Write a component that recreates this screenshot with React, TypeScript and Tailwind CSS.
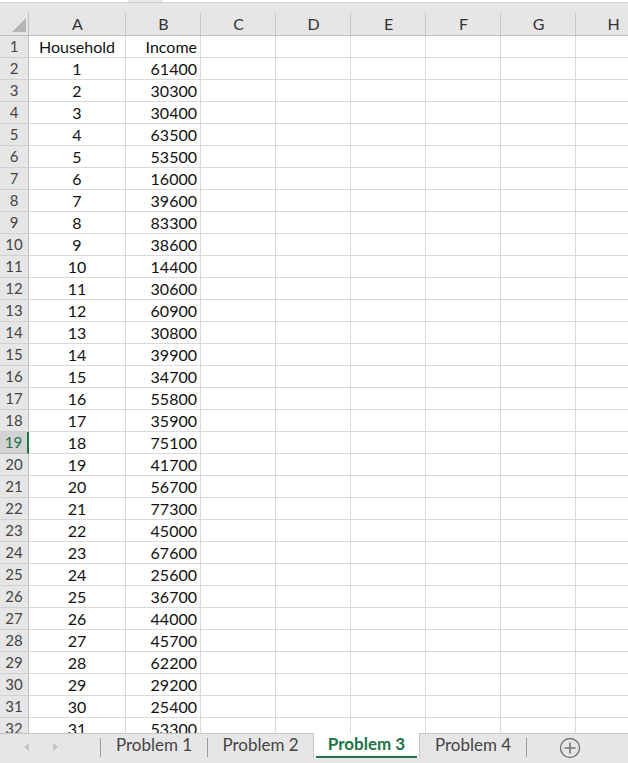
import React from "react";

const incomes = [61400,30300,30400,63500,53500,16000,39600,83300,38600,14400,30600,60900,30800,39900,34700,55800,35900,75100,41700,56700,77300,45000,67600,25600,36700,44000,45700,62200,29200,25400,53300];
const cols = ["A","B","C","D","E","F","G","H"];
const gridCols = "grid grid-cols-[29px_97px_75px_75px_75px_75px_75px_75px_75px] w-[651px]";

function Cell({ children, className = "" }: { children?: React.ReactNode; className?: string }) {
  return <div className={"h-[22px] border-r border-b border-[#d9d9d9] flex items-center overflow-hidden whitespace-nowrap " + className}>{children}</div>;
}

export default function App() {
  const rows: { n: number; a: string; b: string }[] = [{ n: 1, a: "Household", b: "Income" }];
  incomes.forEach((v, i) => rows.push({ n: i + 2, a: String(i + 1), b: String(v) }));
  return (
    <div className="w-[628px] h-[763px] flex flex-col overflow-hidden bg-white text-[16px] text-[#111]" style={{ fontFamily: "Lato, 'Noto Sans', sans-serif" }}>
      <div className="h-[3px] shrink-0 flex border-b border-[#d0d0d0]">
        <div className="w-[128px] bg-white" />
        <div className="w-[35px] bg-[#e6e6e6]" />
        <div className="flex-1 bg-white" />
      </div>
      <div className={gridCols + " h-[33px] shrink-0 bg-[#e6e6e6] border-b border-[#bfbfbf] text-[#333]"}>
        <div className="relative border-r border-[#bfbfbf] mt-[10px]">
          <svg width="14" height="14" viewBox="0 0 14 14" className="absolute right-[2px] bottom-[3px]">
            <polygon points="14,0 14,14 0,14" fill="#b5b5b5" />
          </svg>
        </div>
        {cols.map((c) => (
          <div key={c} className="relative flex items-end justify-center">
            <span className="leading-[22px]">{c}</span>
            <div className="absolute right-0 top-[10px] bottom-0 w-px bg-[#c6c6c6]" />
          </div>
        ))}
      </div>
      <div className="flex-1 overflow-hidden">
        {rows.map((r) => {
          const sel = r.n === 19;
          return (
            <div key={r.n} className={gridCols}>
              <div className={"h-[22px] border-b flex items-center justify-center text-[15px] " + (sel ? "bg-[#d3d3d3] text-[#217346] border-r-2 border-r-[#217346] border-b-[#bfbfbf]" : "bg-[#e6e6e6] text-[#444] border-r border-r-[#bfbfbf] border-b-[#d0d0d0]")}>{r.n}</div>
              <Cell className="justify-center">{r.a}</Cell>
              <Cell className={"justify-end pr-[3px]"}>{r.b}</Cell>
              <Cell /><Cell /><Cell /><Cell /><Cell /><Cell />
            </div>
          );
        })}
      </div>
      <div className="h-[30px] shrink-0 bg-[#e6e6e6] border-t border-[#c6c6c6] flex items-start text-[17px] text-[#444]">
        <div className="w-[100px] h-[26px] flex items-center">
          <svg width="8" height="10" viewBox="0 0 8 10" className="ml-[23px]"><polygon points="6,1 6,9 1,5" fill="#c4c4c4" /></svg>
          <svg width="8" height="10" viewBox="0 0 8 10" className="ml-[20px]"><polygon points="2,1 2,9 7,5" fill="#c4c4c4" /></svg>
        </div>
        <div className="w-px h-[19px] bg-[#9a9a9a] mt-[4px]" />
        <div className="w-[106px] h-[21px] flex items-center justify-center">Problem 1</div>
        <div className="w-px h-[19px] bg-[#9a9a9a] mt-[4px]" />
        <div className="w-[105px] h-[21px] flex items-center justify-center">Problem 2</div>
        <div className="w-[107px] h-[25px] -mt-px bg-white border-x border-[#c6c6c6] flex flex-col items-center">
          <div className="h-[22px] flex items-center font-bold text-[#217346]">Problem 3</div>
          <div className="h-[2px] w-[101px] bg-[#217346] mt-auto" />
        </div>
        <div className="w-[106px] h-[21px] flex items-center justify-center">Problem 4</div>
        <div className="w-px h-[19px] bg-[#9a9a9a] mt-[4px]" />
        <div className="ml-[32px] mt-[3px]">
          <svg width="22" height="22" viewBox="0 0 22 22">
            <circle cx="11" cy="11" r="9.5" fill="none" stroke="#777" strokeWidth="1.4" />
            <path d="M11 5.5V16.5M5.5 11H16.5" stroke="#777" strokeWidth="1.6" />
          </svg>
        </div>
      </div>
    </div>
  );
}
